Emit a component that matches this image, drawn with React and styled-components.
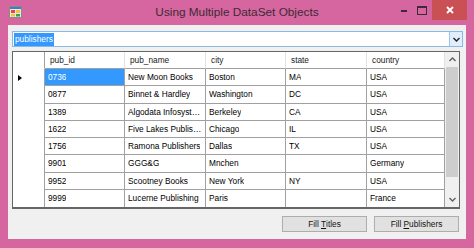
import React from "react";
import styled, { createGlobalStyle } from "styled-components";

const Global = createGlobalStyle`
  html, body { margin: 0; padding: 0; }
  body {
    width: 474px; height: 248px; overflow: hidden;
    background: #d5669f;
    font-family: "Liberation Sans", Arial, sans-serif;
  }
`;

const Window = styled.div`
  width: 474px; height: 248px;
  display: flex; flex-direction: column;
  background: #d5669f;
`;

const TitleBar = styled.div`
  height: 25px; flex: none;
  position: relative;
  display: flex; align-items: center; justify-content: center;
`;

const AppIcon = styled.svg`
  position: absolute; left: 9px; top: 6px;
`;

const Title = styled.div`
  font-family: "Liberation Sans", Arial, sans-serif;
  font-size: 11.8px;
  color: #3e2a36;
  margin-top: -1px;
`;

const Caption = styled.div`
  position: absolute; right: 7px; top: 0;
  display: flex; align-items: flex-start;
`;

const CapBtn = styled.div`
  width: ${p => p.$w}px; height: 20px;
  display: flex; align-items: center; justify-content: center;
  background: ${p => p.$bg || "transparent"};
`;

const Client = styled.div`
  flex: 1;
  margin: 0 8px 9px 8px;
  background: #f0f0f0;
  display: flex; flex-direction: column;
  padding: 6px 3px 7px 4px;
  gap: 4px;
  font-size: 8.3px;
  color: #000;
`;

const Combo = styled.div`
  height: 16px; box-sizing: border-box;
  border: 1px solid #8cb8e4;
  background: #fff;
  display: flex; align-items: center;
`;

const ComboText = styled.div`
  flex: 1; display: flex; align-items: center; padding-left: 1px;
`;

const Selected = styled.span`
  background: #3399ff; color: #fff;
  padding: 1px 1px;
  line-height: 11px;
`;

const ComboBtn = styled.div`
  width: 12px; height: 14px;
  background: #e1eefb;
  border-left: 1px solid #9cc3ea;
  display: flex; align-items: center; justify-content: center;
`;

const Grid = styled.div`
  height: 158px; box-sizing: border-box;
  margin-right: 3px;
  border: 1px solid #666;
  border-bottom-width: 2px;
  background: #fff;
  display: flex;
`;

const Table = styled.div`
  display: grid;
  grid-template-columns: 32px 80px 81px 80px 81px 78px;
  grid-template-rows: 17px repeat(8, 1fr);
`;

const Head = styled.div`
  box-sizing: border-box;
  border-right: 1px solid ${p => (p.$corner ? "#a0a0a0" : "#e2e2e2")};
  border-bottom: 1px solid ${p => (p.$corner ? "transparent" : "#a0a0a0")};
  display: flex; align-items: center;
  padding-left: 5px;
  color: #1a1a1a;
  white-space: nowrap;
`;

const RowHead = styled.div`
  box-sizing: border-box;
  border-right: 1px solid #a0a0a0;
  display: flex; align-items: center;
  padding-left: 5px;
`;

const Cell = styled.div`
  box-sizing: border-box;
  border-right: 1px solid #a0a0a0;
  border-bottom: ${p => (p.$last ? "none" : "1px solid #a0a0a0")};
  display: flex; align-items: center;
  padding: 0 2px 0 3px;
  overflow: hidden;
  background: ${p => (p.$sel ? "#3399ff" : "#fff")};
  color: ${p => (p.$sel ? "#fff" : "#000")};
`;

const CellText = styled.span`
  overflow: hidden; white-space: nowrap; text-overflow: ellipsis;
`;

const Arrow = styled.div`
  width: 0; height: 0;
  border-top: 3.5px solid transparent;
  border-bottom: 3.5px solid transparent;
  border-left: 4px solid #000;
`;

const ScrollBar = styled.div`
  width: 14px; flex: none;
  background: #f0f0f0;
  display: flex; flex-direction: column;
`;

const ScrollArrow = styled.div`
  height: 15px; flex: none;
  display: flex; align-items: center; justify-content: center;
`;

const Track = styled.div`
  flex: 1; display: flex; flex-direction: column;
  padding: 0 1px;
`;

const Thumb = styled.div`
  height: 110px;
  background: #cdcdcd;
`;

const Buttons = styled.div`
  display: flex; justify-content: flex-end; gap: 7px;
  margin-top: 3px;
  margin-right: 4px;
`;

const Button = styled.div`
  width: 85px; height: 16px; box-sizing: border-box;
  background: #e1e1e1;
  border: 1px solid #adadad;
  display: flex; align-items: center; justify-content: center;
  color: #111;
`;

const Chevron = ({ up, color = "#606060" }) => (
  <svg width="7" height="5" viewBox="0 0 7 5">
    <polyline
      points={up ? "0.5,4 3.5,1 6.5,4" : "0.5,1 3.5,4 6.5,1"}
      fill="none"
      stroke={color}
      strokeWidth="1.4"
    />
  </svg>
);

const cols = ["pub_id", "pub_name", "city", "state", "country"];
const rows = [
  ["0736", "New Moon Books", "Boston", "MA", "USA"],
  ["0877", "Binnet & Hardley", "Washington", "DC", "USA"],
  ["1389", "Algodata Infosystems", "Berkeley", "CA", "USA"],
  ["1622", "Five Lakes Publishing", "Chicago", "IL", "USA"],
  ["1756", "Ramona Publishers", "Dallas", "TX", "USA"],
  ["9901", "GGG&G", "Mnchen", "", "Germany"],
  ["9952", "Scootney Books", "New York", "NY", "USA"],
  ["9999", "Lucerne Publishing", "Paris", "", "France"],
];

export default function App() {
  return (
    <Window>
      <Global />
      <TitleBar>
        <AppIcon width="13" height="12" viewBox="0 0 13 12">
          <rect x="0.5" y="0.5" width="12" height="11" fill="#e8e8e8" stroke="#8a8a8a" />
          <rect x="1" y="1" width="11" height="2" fill="#4a78c8" />
          <rect x="2" y="4" width="4" height="3" fill="#e84a3a" />
          <rect x="7" y="4" width="4" height="3" fill="#f4c430" />
          <rect x="2" y="8" width="4" height="2.5" fill="#f4c430" />
          <rect x="7" y="8" width="4" height="2.5" fill="#3aa04a" />
        </AppIcon>
        <Title>Using Multiple DataSet Objects</Title>
        <Caption>
          <CapBtn $w={15}>
            <svg width="7" height="3" viewBox="0 0 7 3"><rect x="0" y="1" width="6" height="2" fill="#3e2a36" /></svg>
          </CapBtn>
          <CapBtn $w={20}>
            <svg width="10" height="9" viewBox="0 0 10 9">
              <rect x="0.5" y="0.5" width="9" height="8" fill="none" stroke="#3e2a36" />
              <rect x="0" y="0" width="10" height="2" fill="#3e2a36" />
            </svg>
          </CapBtn>
          <CapBtn $w={35} $bg="#c95054">
            <svg width="8" height="8" viewBox="0 0 8 8">
              <path d="M1 1 L7 7 M7 1 L1 7" stroke="#fff" strokeWidth="1.8" />
            </svg>
          </CapBtn>
        </Caption>
      </TitleBar>
      <Client>
        <Combo>
          <ComboText><Selected>publishers</Selected></ComboText>
          <ComboBtn><Chevron color="#222" /></ComboBtn>
        </Combo>
        <Grid>
          <Table>
            <Head $corner />
            {cols.map(c => <Head key={c}>{c}</Head>)}
            {rows.map((r, i) => (
              <React.Fragment key={r[0]}>
                <RowHead>{i === 0 && <Arrow />}</RowHead>
                {r.map((v, j) => (
                  <Cell key={j} $last={i === rows.length - 1} $sel={i === 0 && j === 0}>
                    <CellText>{v}</CellText>
                  </Cell>
                ))}
              </React.Fragment>
            ))}
          </Table>
          <ScrollBar>
            <ScrollArrow><Chevron up /></ScrollArrow>
            <Track><Thumb /></Track>
            <ScrollArrow><Chevron /></ScrollArrow>
          </ScrollBar>
        </Grid>
        <Buttons>
          <Button>Fill&nbsp;<u>T</u>itles</Button>
          <Button>Fill&nbsp;<u>P</u>ublishers</Button>
        </Buttons>
      </Client>
    </Window>
  );
}
